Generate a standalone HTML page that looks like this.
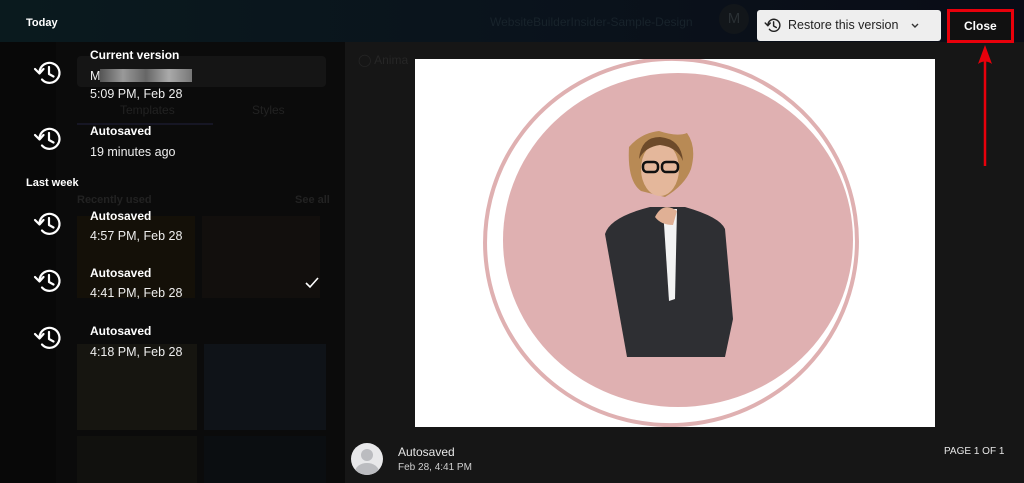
<!DOCTYPE html>
<html><head><meta charset="utf-8"><style>
*{margin:0;padding:0;box-sizing:border-box}
body{width:1024px;height:483px;overflow:hidden;background:#151515;font-family:"Liberation Sans",sans-serif;position:relative}
.abs{position:absolute}
.top{left:0;top:0;width:1024px;height:42px;background:linear-gradient(90deg,#0a1a1e,#0a131c 50%,#0a0c16)}
.left{left:0;top:42px;width:345px;height:441px;background:#0b0b0b}
.side{left:0;top:42px;width:56px;height:441px;background:#080808}
.t{color:#fff;position:absolute;white-space:nowrap}
.h{font-weight:bold;font-size:12px}
.s{font-size:12.5px;color:#eee}
.ic{position:absolute;width:30px;height:30px}
.dim{color:#222;font-size:11px;position:absolute}
</style></head><body>
<div class="abs top"></div>
<div class="abs left"></div>
<div class="abs side"></div>
<div class="abs" style="left:77px;top:56px;width:249px;height:31px;background:#151515;border-radius:4px"></div>
<div class="abs" style="left:77px;top:123px;width:136px;height:2px;background:#161624"></div>
<div class="abs" style="left:77px;top:216px;width:118px;height:82px;background:#141008"></div>
<div class="abs" style="left:202px;top:216px;width:118px;height:82px;background:#120f0d"></div>
<div class="abs" style="left:77px;top:344px;width:120px;height:86px;background:#161510"></div>
<div class="abs" style="left:204px;top:344px;width:122px;height:86px;background:#0f1318"></div>
<div class="abs" style="left:77px;top:436px;width:120px;height:47px;background:#11110e"></div>
<div class="abs" style="left:204px;top:436px;width:122px;height:47px;background:#0b0e11"></div>
<div class="dim" style="left:120px;top:103px;font-size:12px">Templates</div>
<div class="dim" style="left:252px;top:103px;font-size:12px">Styles</div>
<div class="dim" style="left:77px;top:194px;font-weight:bold">Recently used</div>
<div class="dim" style="left:295px;top:194px;font-weight:bold">See all</div>
<div class="dim" style="left:490px;top:15px;font-size:12px;color:#18232b">WebsiteBuilderInsider-Sample-Design</div>
<div class="abs" style="left:719px;top:4px;width:30px;height:30px;border-radius:50%;background:#12161a;color:#2a3034;font-size:15px;text-align:center;line-height:30px">M</div>

<div class="t h" style="left:26px;top:17px;font-size:11px">Today</div>
<div class="t h" style="left:26px;top:177px;font-size:11px">Last week</div>

<svg width="0" height="0" style="position:absolute"><defs>
<g id="hi" fill="none" stroke="#fff" stroke-width="2.2" stroke-linecap="round" stroke-linejoin="round">
<path d="M6.5 13 A10 10 0 1 1 9 20.5"/>
<path d="M2 10 L6.5 14.5 L10.5 10"/>
<path d="M16 8 V15 L20.5 17.5"/>
</g></defs></svg>
<svg class="ic" style="left:33px;top:59px" viewBox="0 0 30 30"><use href="#hi"/></svg>
<svg class="ic" style="left:33px;top:125px" viewBox="0 0 30 30"><use href="#hi"/></svg>
<svg class="ic" style="left:33px;top:210px" viewBox="0 0 30 30"><use href="#hi"/></svg>
<svg class="ic" style="left:33px;top:267px" viewBox="0 0 30 30"><use href="#hi"/></svg>
<svg class="ic" style="left:33px;top:324px" viewBox="0 0 30 30"><use href="#hi"/></svg>

<div class="t h" style="left:90px;top:48px">Current version</div>
<div class="t s" style="left:90px;top:69px">M</div>
<div class="abs" style="left:100px;top:69px;width:92px;height:13px;background:linear-gradient(90deg,#555,#999,#666,#aaa,#777)"></div>
<div class="t s" style="left:90px;top:87px">5:09 PM, Feb 28</div>
<div class="t h" style="left:90px;top:124px">Autosaved</div>
<div class="t s" style="left:90px;top:145px">19 minutes ago</div>
<div class="t h" style="left:90px;top:209px">Autosaved</div>
<div class="t s" style="left:90px;top:229px">4:57 PM, Feb 28</div>
<div class="t h" style="left:90px;top:266px">Autosaved</div>
<div class="t s" style="left:90px;top:286px">4:41 PM, Feb 28</div>
<div class="t h" style="left:90px;top:324px">Autosaved</div>
<div class="t s" style="left:90px;top:345px">4:18 PM, Feb 28</div>
<svg class="abs" style="left:304px;top:276px" width="16" height="14" viewBox="0 0 16 14"><path d="M2 7 L6 11 L14 2" fill="none" stroke="#fff" stroke-width="1.6"/></svg>

<div class="abs" style="left:345px;top:42px;width:679px;height:441px;background:#161616"></div>
<div class="abs" style="left:415px;top:59px;width:520px;height:368px;background:#fff;overflow:hidden">
<svg width="520" height="368" viewBox="0 0 520 368">
<ellipse cx="263" cy="181" rx="175" ry="167" fill="#dfb0b1"/>
<ellipse cx="256" cy="183" rx="186" ry="183" fill="none" stroke="#dfb0b1" stroke-width="4" transform="rotate(-8 256 183)"/>
<path d="M212 298 L190 175 Q195 158 235 148 L270 148 Q305 158 310 170 L318 260 L310 298 Z" fill="#2e2f33"/>
<path d="M248 150 L262 150 L260 240 L254 242 Z" fill="#f3f3f3"/>
<path d="M214 88 Q212 122 226 132 L250 138 Q270 126 276 110 Q282 88 272 74 Q262 78 244 72 Q226 74 214 88Z" fill="#b88a55"/>
<ellipse cx="245" cy="110" rx="19" ry="27" fill="#e4b79b"/>
<path d="M224 100 Q226 78 245 78 Q266 80 268 102 Q262 88 245 86 Q230 88 224 100Z" fill="#6d4a2a"/>
<rect x="228" y="103" width="15" height="10" rx="4" fill="none" stroke="#111" stroke-width="2.5"/>
<rect x="247" y="103" width="16" height="10" rx="4" fill="none" stroke="#111" stroke-width="2.5"/>
<path d="M240 158 Q248 142 262 152 L258 166 Q246 166 240 158Z" fill="#e0b095"/>
</svg>
</div>
<div class="abs" style="left:358px;top:53px;color:#262626;font-size:12px">◯ Anima</div>

<div class="abs" style="left:757px;top:10px;width:184px;height:31px;background:#eeeeee;border-radius:3px"></div>
<svg class="abs" style="left:764px;top:17px" width="18" height="18" viewBox="0 0 30 30"><g fill="none" stroke="#222" stroke-width="2.4" stroke-linecap="round" stroke-linejoin="round"><path d="M6.5 13 A10 10 0 1 1 9 20.5"/><path d="M2 10 L6.5 14.5 L10.5 10"/><path d="M16 8 V15 L20.5 17.5"/></g></svg>
<div class="t" style="left:788px;top:18px;color:#222;font-size:12.5px">Restore this version</div>
<svg class="abs" style="left:910px;top:22px" width="10" height="8" viewBox="0 0 10 8"><path d="M2 2 L5 5 L8 2" fill="none" stroke="#333" stroke-width="1.4"/></svg>
<div class="abs" style="left:947px;top:9px;width:67px;height:34px;border:3px solid #e8000b;background:#111"></div>
<div class="t h" style="left:964px;top:19px;font-size:12px">Close</div>
<svg class="abs" style="left:975px;top:42px" width="20" height="126" viewBox="0 0 20 126"><path d="M10 124 L10 14" stroke="#e8000b" stroke-width="2.5"/><path d="M3 22 L10 3 L17 22 Q10 17 3 22Z" fill="#e8000b"/></svg>

<div class="abs" style="left:351px;top:443px;width:32px;height:32px;border-radius:50%;background:#e8e8ea;overflow:hidden">
<div class="abs" style="left:10px;top:6px;width:12px;height:12px;border-radius:50%;background:#bbbcc0"></div>
<div class="abs" style="left:4px;top:20px;width:24px;height:18px;border-radius:50%;background:#bbbcc0"></div></div>
<div class="t" style="left:398px;top:445px;font-size:12px;color:#e6e6e6">Autosaved</div>
<div class="t" style="left:398px;top:462px;font-size:10px;color:#cfcfcf">Feb 28, 4:41 PM</div>
<div class="t" style="left:944px;top:446px;font-size:10px;color:#e6e6e6">PAGE 1 OF 1</div>
</body></html>
